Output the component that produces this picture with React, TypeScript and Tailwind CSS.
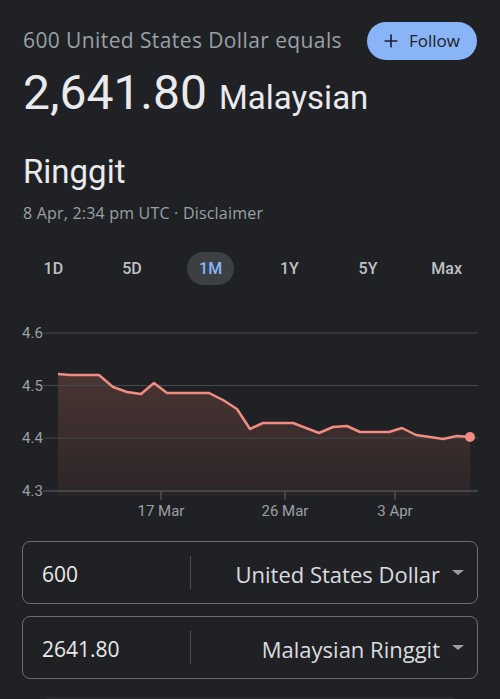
import React from "react";
import { Plus } from "lucide-react";

const font = { fontFamily: "Roboto, 'Open Sans', sans-serif" };
const textFont = { fontFamily: "'Open Sans', Roboto, sans-serif" };

// chart points in svg coords (svg top = page y 315)
const points: [number, number][] = [
  [58, 59], [70, 60], [99, 60], [113, 72], [127, 77], [141, 79], [154, 68],
  [167, 78], [209, 78], [223, 85], [237, 94], [250, 114], [263, 108], [293, 108],
  [306, 113], [319, 118], [333, 112], [347, 111], [360, 117], [389, 117],
  [402, 113], [416, 120], [430, 122], [443, 124], [457, 121], [470, 122],
];

const ranges = ["1D", "5D", "1M", "1Y", "5Y", "Max"];

const Chart = () => {
  const line = points.map((p) => p.join(",")).join(" ");
  const area = `58,181 ${line} 470,181`;
  const grid = [
    { y: 18, label: "4.6" },
    { y: 70.5, label: "4.5" },
    { y: 123, label: "4.4" },
    { y: 176, label: "4.3" },
  ];
  const ticks = [
    { x: 161, label: "17 Mar" },
    { x: 285, label: "26 Mar" },
    { x: 395, label: "3 Apr" },
  ];

  return (
    <svg width="500" height="210" viewBox="0 0 500 210" className="block" style={font}>
      <defs>
        <linearGradient id="fill" x1="0" y1="0" x2="0" y2="1">
          <stop offset="0%" stopColor="#4a3532" />
          <stop offset="100%" stopColor="#2b2527" />
        </linearGradient>
      </defs>
      <polygon points={area} fill="url(#fill)" />
      {grid.map((g, i) => (
        <g key={g.label}>
          <line x1="43" x2="478" y1={g.y} y2={g.y} stroke={i === 3 ? "#5f6368" : "#45484c"} strokeWidth="1" />
          <text x="22" y={g.y} dominantBaseline="central" fill="#9aa0a6" fontSize="15">
            {g.label}
          </text>
        </g>
      ))}
      {ticks.map((t) => (
        <g key={t.label}>
          <line x1={t.x} x2={t.x} y1="176" y2="185" stroke="#5f6368" strokeWidth="1" />
          <text x={t.x} y="196" textAnchor="middle" dominantBaseline="central" fill="#9aa0a6" fontSize="15">
            {t.label}
          </text>
        </g>
      ))}
      <polyline points={line} fill="none" stroke="#f28b82" strokeWidth="2.5" strokeLinejoin="round" />
      <circle cx="470" cy="122" r="5" fill="#f28b82" />
    </svg>
  );
};

const ConvertRow = ({ amount, currency }: { amount: string; currency: string }) => (
  <div className="flex items-center h-[63px] rounded-lg border border-[#6b6e72]" style={textFont}>
    <div className="w-[167px] pl-[19px] text-[21px] leading-[28px] text-[#e8eaed] pt-[3px]">{amount}</div>
    <div className="w-px h-[33px] bg-[#4a4d51]" />
    <div className="flex-1 flex items-center justify-end pr-[13px] text-[22px] leading-[28px] text-[#dadce0]">
      <span className="pt-[3px]">{currency}</span>
      <span className="ml-[12px] w-0 h-0 border-l-[6px] border-r-[6px] border-t-[5px] border-l-transparent border-r-transparent border-t-[#9aa0a6]" />
    </div>
  </div>
);

export default function App() {
  return (
    <div className="w-[500px] h-[699px] bg-[#202124] overflow-hidden" style={font}>
      <div className="px-[23px] pt-[22px]">
        <div className="flex items-center justify-between">
          <span className="text-[21px] tracking-[0.4px] text-[#9aa0a6]" style={textFont}>
            600 United States Dollar equals
          </span>
          <button
            className="flex items-center gap-[8px] h-[38px] pl-[14px] pr-[17px] rounded-full bg-[#8ab4f8] text-[#202124] text-[17px]"
            style={textFont}
          >
            <Plus className="w-[20px] h-[20px]" strokeWidth={2} />
            Follow
          </button>
        </div>
        <div className="flex items-baseline mt-[5px] leading-[56px] text-[#e8eaed]">
          <span className="text-[48px]">2,641.80</span>
          <span className="ml-[12px] text-[33px]">Malaysian</span>
        </div>
        <div className="mt-[26px] text-[33px] leading-[40px] text-[#e8eaed]">Ringgit</div>
        <div className="mt-[10px] text-[16px] tracking-[0.2px] leading-[22px] text-[#9aa0a6]" style={textFont}>
          8 Apr, 2:34 pm UTC · Disclaimer
        </div>
      </div>

      <div className="grid grid-cols-6 px-[14px] mt-[28px]">
        {ranges.map((r) => (
          <div key={r} className="flex justify-center">
            <span
              className={
                r === "1M"
                  ? "h-[33px] px-[12px] flex items-center rounded-full bg-[#3c4043] text-[#8ab4f8] text-[16px] font-medium"
                  : "h-[33px] px-[12px] flex items-center text-[#bdc1c6] text-[16px] font-medium"
              }
            >
              {r}
            </span>
          </div>
        ))}
      </div>

      <div className="mt-[30px]">
        <Chart />
      </div>

      <div className="px-[22px] mt-[16px] flex flex-col gap-[12px]">
        <ConvertRow amount="600" currency="United States Dollar" />
        <ConvertRow amount="2641.80" currency="Malaysian Ringgit" />
      </div>
      <div className="mx-[38px] mt-[18px] h-[12px] rounded-t-[12px] bg-[#2a2b2e]" />
    </div>
  );
}
